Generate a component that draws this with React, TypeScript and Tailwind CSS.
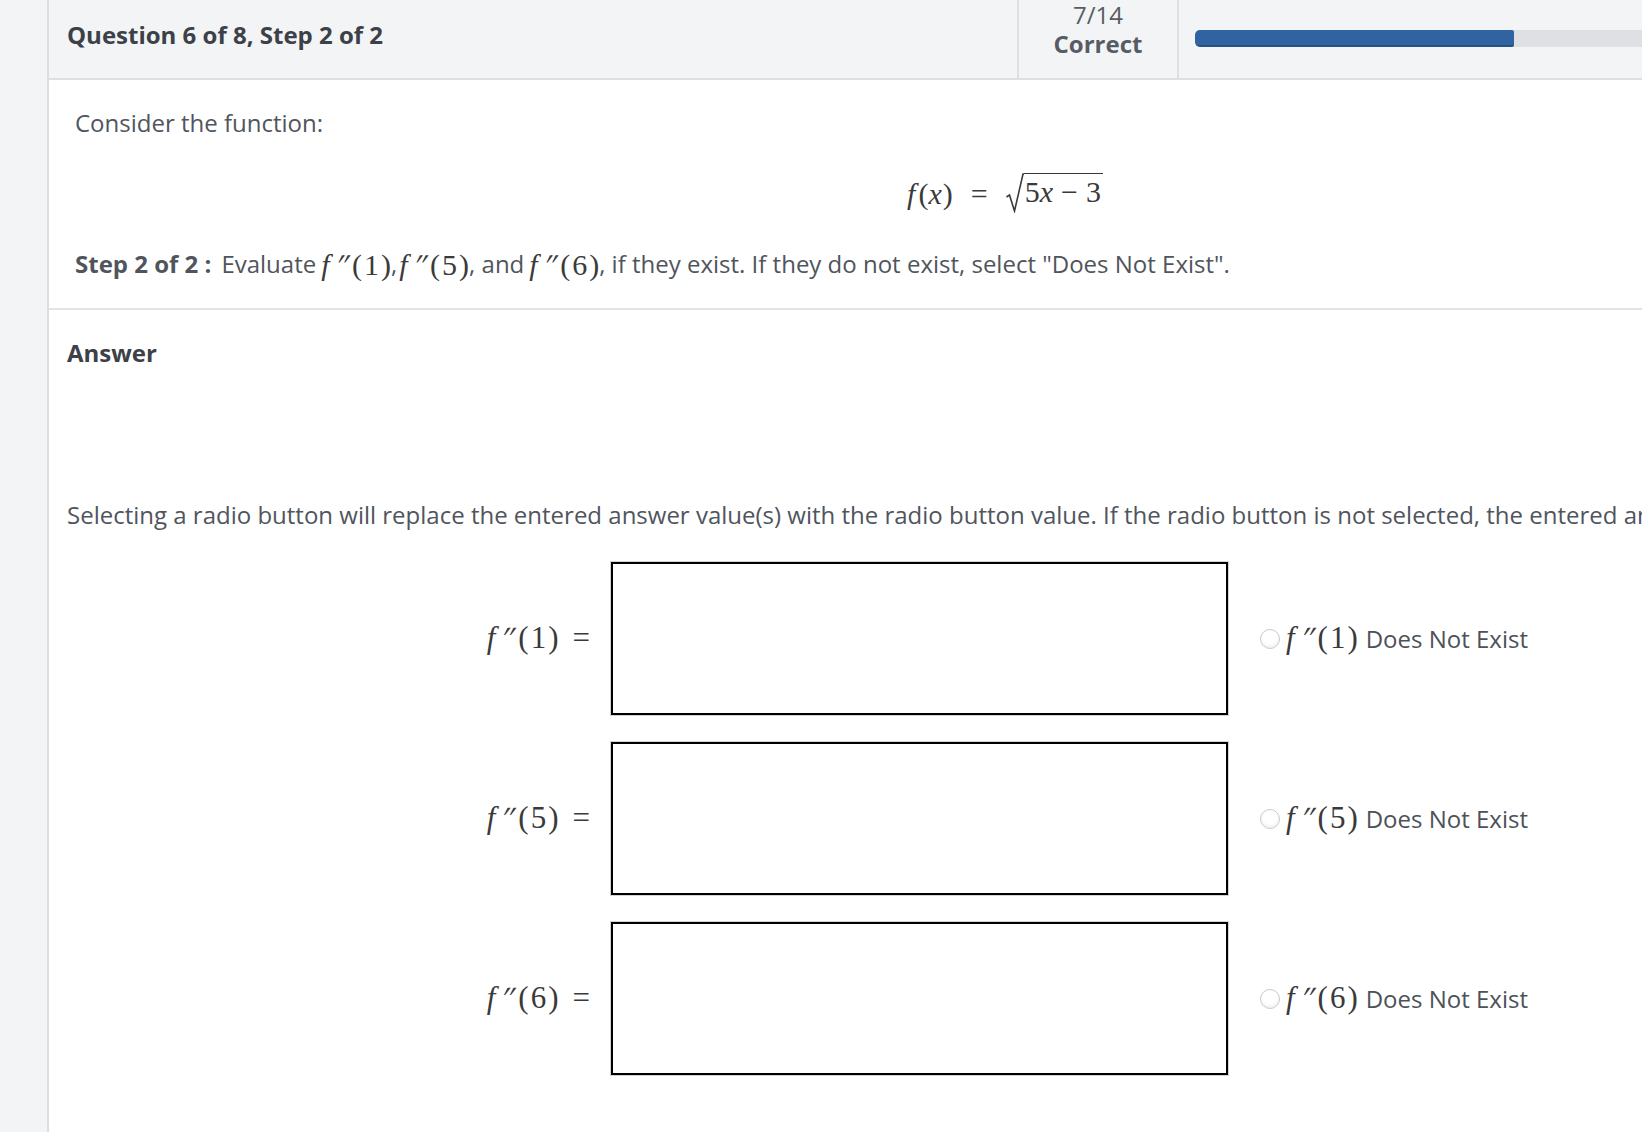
import React from "react";

const serif = "font-['Liberation_Serif',serif]";

function FPP({ n, size }: { n: string; size: string }) {
  return (
    <span className={`${serif} ${size} text-[#3a3a3a] whitespace-nowrap inline-flex items-baseline`}>
      <i>f</i>
      <span className="ml-[6px] mr-[4px] inline-block -skew-x-[22deg]">″</span>
      <span>(</span>
      <span className="mx-[2px]">{n}</span>
      <span>)</span>
    </span>
  );
}

function Radical() {
  return (
    <span className="inline-flex items-start">
      <svg width="18" height="40" viewBox="0 0 18 40" className="shrink-0">
        <path d="M0.5 24 L3.5 22 L8.5 38 L17 1 L18 1" fill="none" stroke="#3a3a3a" strokeWidth="1.6" strokeLinejoin="miter" />
      </svg>
      <span className="border-t-[1.6px] border-[#3a3a3a] pl-[1px] pr-[2px] leading-[36px]">
        5<i>x</i>
        <span className="mx-[8px]">−</span>3
      </span>
    </span>
  );
}

function AnswerRow({ n }: { n: string }) {
  return (
    <div className="flex items-center">
      <div className="w-[523px] flex justify-end items-center">
        <FPP n={n} size="text-[31px]" />
        <span className={`${serif} text-[31px] text-[#3a3a3a] ml-[14px]`}>=</span>
      </div>
      <div className="ml-[21px] w-[617px] h-[153px] border-2 border-black bg-white ring-1 ring-[#d2d2d2]" />
      <div className="ml-[32px] flex items-center">
        <span className="w-[20px] h-[20px] rounded-full border border-[#cacaca] bg-white shadow-[inset_0_-2px_3px_rgba(0,0,0,0.06)]" />
        <span className="ml-[6px]">
          <FPP n={n} size="text-[31px]" />
        </span>
        <span className="ml-[8px] text-[24px] text-[#4d5259]">Does Not Exist</span>
      </div>
    </div>
  );
}

export default function App() {
  return (
    <div className="w-[1642px] h-[1132px] overflow-hidden flex bg-white font-['Open_Sans',sans-serif] text-[#50555d]">
      <div className="w-[49px] shrink-0 bg-[#f3f4f6] border-r-2 border-[#dcdddf]" />
      <div className="w-[1912px] shrink-0 flex flex-col">
        <div className="h-[80px] flex bg-[#f3f4f6] border-b-2 border-[#dedfe1]">
          <div className="w-[968px] pl-[18px] flex items-center pb-[8px] text-[24px] font-bold text-[#3c4148]">
            Question 6 of 8, Step 2 of 2
          </div>
          <div className="w-[162px] border-x-2 border-[#dedfe1] flex flex-col items-center text-[24px] leading-[29px] text-[#575c64]">
            <span>7/14</span>
            <span className="font-bold">Correct</span>
          </div>
          <div className="flex-1 pl-[16px] pt-[30px]">
            <div className="h-[17px] rounded-l-[5px] bg-[#dfe0e3] flex overflow-hidden">
              <div className="w-[319px] bg-[#3064a0] rounded-r-[2px] shadow-[inset_0_-2px_0_rgba(0,0,0,0.18)]" />
            </div>
          </div>
        </div>

        <div className="px-[26px] pt-[28px] pb-[27px] border-b-2 border-[#e2e3e5]">
          <p className="text-[24px] leading-[30px]">Consider the function:</p>
          <div className="mt-[31px] h-[48px] flex justify-center items-center">
            <span className={`${serif} text-[30px] text-[#3a3a3a] flex items-center whitespace-nowrap`}>
              <span>
                <i>f</i>
                <span className="ml-[3px]">(</span>
                <i>x</i>
                <span className="ml-[1px]">)</span>
              </span>
              <span className="mx-[18px]">=</span>
              <Radical />
            </span>
          </div>
          <p className="mt-[30px] h-[34px] flex items-center text-[24px] whitespace-nowrap">
            <span className="font-bold">Step 2 of 2 :</span>
            <span className="ml-[10px]">Evaluate</span>
            <span className="ml-[5px]"><FPP n="1" size="text-[30px]" /></span>
            <span>,</span>
            <span className="ml-[2px]"><FPP n="5" size="text-[30px]" /></span>
            <span>, and</span>
            <span className="ml-[5px]"><FPP n="6" size="text-[30px]" /></span>
            <span>, if they exist. If they do not exist, select "Does Not Exist".</span>
          </p>
        </div>

        <div className="pl-[18px] pt-[28px]">
          <p className="text-[24px] leading-[30px] font-bold text-[#3c4148]">Answer</p>
          <p className="mt-[132px] text-[24px] leading-[30px] whitespace-nowrap">
            Selecting a radio button will replace the entered answer value(s) with the radio button value. If the radio button is not selected, the entered answer value(s) will be submitted.
          </p>
          <div className="mt-[32px] flex flex-col gap-[27px]">
            <AnswerRow n="1" />
            <AnswerRow n="5" />
            <AnswerRow n="6" />
          </div>
        </div>
      </div>
    </div>
  );
}
